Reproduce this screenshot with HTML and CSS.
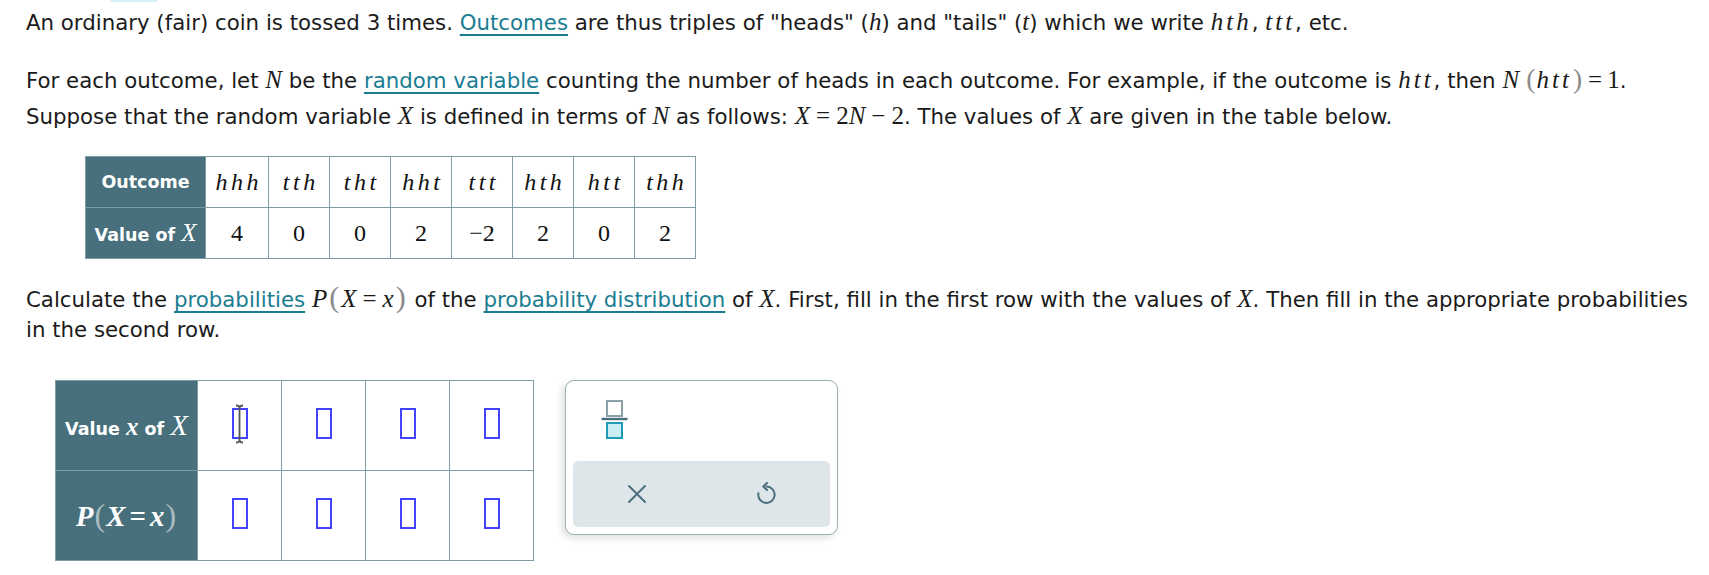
FILE: index.html
```html
<!DOCTYPE html>
<html lang="en">
<head>
<meta charset="utf-8">
<title>Probability distribution</title>
<link rel="stylesheet" href="styles.css">
</head>
<body>
<div class="page">
  <div class="stub"></div>
  <p class="para p1">An ordinary (fair) coin is tossed 3 times. <a class="lnk" href="#">Outcomes</a> are thus triples of "heads" (<i class="mv">h</i>) and "tails" (<i class="mv">t</i>) which we write <i class="mv ws">hth</i>, <i class="mv ws">ttt</i>, etc.</p>
  <p class="para p2">For each outcome, let <i class="mv">N</i> be the <a class="lnk" href="#">random variable</a> counting the number of heads in each outcome. For example, if the outcome is <i class="mv ws">htt</i>, then <span class="math"><i class="mv">N</i> <span class="par">(</span><i class="mv ws">htt</i><span class="par">)</span><span class="op op-s">=</span>1</span>.<br>Suppose that the random variable <i class="mv">X</i> is defined in terms of <i class="mv">N</i> as follows: <span class="math"><i class="mv">X</i><span class="op">=</span>2<i class="mv">N</i><span class="op">−</span>2</span>. The values of <i class="mv">X</i> are given in the table below.</p>

  <table class="t1">
    <tr>
      <th class="hd">Outcome</th>
      <td class="c1"><i class="tm">hhh</i></td>
      <td><i class="tm">tth</i></td>
      <td><i class="tm">tht</i></td>
      <td><i class="tm">hht</i></td>
      <td><i class="tm">ttt</i></td>
      <td><i class="tm">hth</i></td>
      <td><i class="tm">htt</i></td>
      <td><i class="tm">thh</i></td>
    </tr>
    <tr>
      <th class="hd">Value of <i class="hx">X</i></th>
      <td class="c1"><span class="tn">4</span></td>
      <td><span class="tn">0</span></td>
      <td><span class="tn">0</span></td>
      <td><span class="tn">2</span></td>
      <td><span class="tn">−2</span></td>
      <td><span class="tn">2</span></td>
      <td><span class="tn">0</span></td>
      <td><span class="tn">2</span></td>
    </tr>
  </table>

  <p class="para p3">Calculate the <a class="lnk" href="#">probabilities</a> <span class="math"><i class="mv">P</i><span class="par par-l">(</span><i class="mv">X</i><span class="op">=</span><i class="mv">x</i><span class="par par-l">)</span></span> of the <a class="lnk" href="#">probability distribution</a> of <i class="mv">X</i>. First, fill in the first row with the values of <i class="mv">X</i>. Then fill in the appropriate probabilities<br>in the second row.</p>

  <div class="answer">
    <table class="t2">
      <tr>
        <th class="hd2">Value <i class="hx2">x</i> of <i class="hx3">X</i></th>
        <td><span class="slot-wrap"><span class="slot"></span><svg class="ibeam" width="11" height="40" viewBox="0 0 11 40"><path d="M2 1.5 Q5.5 1.5 5.5 4 Q5.5 1.5 9 1.5 M5.5 4 V36 M2 38.5 Q5.5 38.5 5.5 36 Q5.5 38.5 9 38.5" fill="none" stroke="#555" stroke-width="1.8"/></svg></span></td>
        <td><span class="slot"></span></td>
        <td><span class="slot"></span></td>
        <td><span class="slot"></span></td>
      </tr>
      <tr>
        <th class="hd2"><span class="pm"><i>P</i><span class="par2">(</span><i>X</i><span class="op2">=</span><i>x</i><span class="par2">)</span></span></th>
        <td><span class="slot"></span></td>
        <td><span class="slot"></span></td>
        <td><span class="slot"></span></td>
        <td><span class="slot"></span></td>
      </tr>
    </table>

    <div class="pad">
      <div class="pad-top">
        <svg class="frac" width="28" height="42" viewBox="0 0 28 42">
          <rect x="6" y="2" width="15" height="15" fill="#fff" stroke="#8ca1a7" stroke-width="2"/>
          <line x1="0.5" y1="20" x2="26.5" y2="20" stroke="#4c6e7a" stroke-width="2.4"/>
          <rect x="6" y="24" width="15" height="15" fill="#c9eef4" stroke="#1c9cb5" stroke-width="2"/>
        </svg>
      </div>
      <div class="pad-bar">
        <button class="pbtn" type="button" aria-label="Clear">
          <svg width="22" height="22" viewBox="0 0 22 22"><path d="M3 3 L19 19 M19 3 L3 19" stroke="#4a6f7c" stroke-width="2" stroke-linecap="round"/></svg>
        </button>
        <button class="pbtn" type="button" aria-label="Undo">
          <svg width="24" height="24" viewBox="0 0 24 24"><path d="M12.5 4.5 A8.2 8.2 0 1 1 4.4 11.2" fill="none" stroke="#4a6f7c" stroke-width="2" stroke-linecap="round"/><path d="M13 1 L9.3 4.5 L13 8" fill="none" stroke="#4a6f7c" stroke-width="2" stroke-linecap="round" stroke-linejoin="round"/></svg>
        </button>
      </div>
    </div>
  </div>
</div>
</body>
</html>
```

FILE: styles.css
```css
html, body {
  margin: 0;
  padding: 0;
  background: #ffffff;
}

body {
  font-family: "DejaVu Sans", Verdana, sans-serif;
  font-size: 21.3px;
  color: #1b1b1b;
}

.page {
  padding: 0 16px 0 26px;
}

.stub {
  width: 48px;
  height: 2px;
  margin-left: 84px;
  background: #d3f0f5;
  border-radius: 0 0 3px 3px;
}

.para {
  margin: 0;
}

.p1 {
  margin-top: 6px;
  line-height: 30px;
}

.p2 {
  margin-top: 25px;
  line-height: 36px;
}

.p3 {
  margin-top: 26px;
  line-height: 30px;
}

.lnk {
  color: #1a7d92;
  text-decoration: underline;
  text-decoration-thickness: 1.5px;
  text-underline-offset: 4px;
}

.mv {
  font-family: "Liberation Serif", "Times New Roman", serif;
  font-style: italic;
  font-size: 25px;
  line-height: 1;
}

.ws {
  letter-spacing: 3px;
}

.math {
  font-family: "Liberation Serif", "Times New Roman", serif;
  font-size: 25px;
  line-height: 1;
  white-space: nowrap;
}

.math .mv {
  font-size: inherit;
}

.par {
  color: #8a8a8a;
  font-style: normal;
  font-size: 1.1em;
  padding: 0 1px;
}

.par-l {
  font-size: 1.2em;
  padding: 0 2px;
  line-height: 0;
}

.op {
  padding: 0 6px;
}

.op-s {
  padding: 0 5px;
}

/* table 1 */
.t1 {
  border-collapse: collapse;
  margin: 21px 0 0 59px;
}

.t1 th,
.t1 td {
  border: 1px solid #7f9ca5;
  padding: 0;
  height: 50px;
  text-align: center;
  vertical-align: middle;
}

.t1 td {
  width: 60px;
}

.t1 td.c1 {
  width: 62px;
}

.hd {
  width: 119px;
  background: #48707c;
  color: #ffffff;
  font-weight: bold;
  font-size: 17.5px;
  white-space: nowrap;
}

.hx {
  font-family: "Liberation Serif", "Times New Roman", serif;
  font-style: italic;
  font-weight: normal;
  font-size: 25px;
}

.tm {
  font-family: "Liberation Serif", "Times New Roman", serif;
  font-style: italic;
  font-size: 24px;
  letter-spacing: 3.5px;
  margin-right: -3.5px;
  color: #111;
}

.tn {
  font-family: "Liberation Serif", "Times New Roman", serif;
  font-size: 24px;
  color: #111;
}

/* answer area */
.answer {
  display: flex;
  align-items: flex-start;
  gap: 31px;
  margin: 35px 0 0 29px;
}

.t2 {
  border-collapse: collapse;
}

.t2 th,
.t2 td {
  border: 1px solid #7f9ca5;
  padding: 0;
  height: 89px;
  text-align: center;
  vertical-align: middle;
}

.t2 td {
  width: 83px;
}

.hd2 {
  width: 141px;
  background: #48707c;
  color: #ffffff;
  font-weight: bold;
  font-size: 17.5px;
  white-space: nowrap;
}

.hx2 {
  font-family: "Liberation Serif", "Times New Roman", serif;
  font-style: italic;
  font-weight: bold;
  font-size: 25px;
}

.hx3 {
  font-family: "Liberation Serif", "Times New Roman", serif;
  font-style: italic;
  font-weight: normal;
  font-size: 29px;
}

.pm {
  font-family: "Liberation Serif", "Times New Roman", serif;
  font-weight: bold;
  font-size: 29px;
}

.pm i {
  font-style: italic;
}

.par2 {
  color: #a9bcc2;
  font-weight: normal;
  font-size: 1.1em;
  padding: 0 1px;
}

.op2 {
  padding: 0 4px;
}

.slot {
  display: inline-block;
  width: 16px;
  height: 31px;
  box-sizing: border-box;
  border: 2px solid #4343ff;
  vertical-align: middle;
  margin-top: -5px;
}

.slot-wrap {
  position: relative;
  display: inline-block;
  vertical-align: middle;
  margin-top: -5px;
}

.slot-wrap .slot {
  margin-top: 0;
  display: block;
}

.ibeam {
  position: absolute;
  left: 2px;
  top: -4px;
}

/* keypad */
.pad {
  width: 273px;
  height: 155px;
  box-sizing: border-box;
  border: 1px solid #9cb0b6;
  border-radius: 9px;
  padding: 7px;
  display: flex;
  flex-direction: column;
  justify-content: space-between;
  box-shadow: -3px 3px 7px rgba(0, 0, 0, 0.13);
  background: #fff;
}

.pad-top {
  display: flex;
  padding: 11px 0 0 28px;
}

.frac {
  display: block;
}

.pad-bar {
  height: 66px;
  background: #dfe6e9;
  border-radius: 5px;
  display: grid;
  grid-template-columns: 1fr 1fr;
  align-items: center;
}

.pbtn {
  border: 0;
  background: transparent;
  padding: 0;
  display: flex;
  justify-content: center;
  align-items: center;
  height: 100%;
  cursor: pointer;
}

.pbtn svg {
  display: block;
  margin-top: -1px;
}
```
